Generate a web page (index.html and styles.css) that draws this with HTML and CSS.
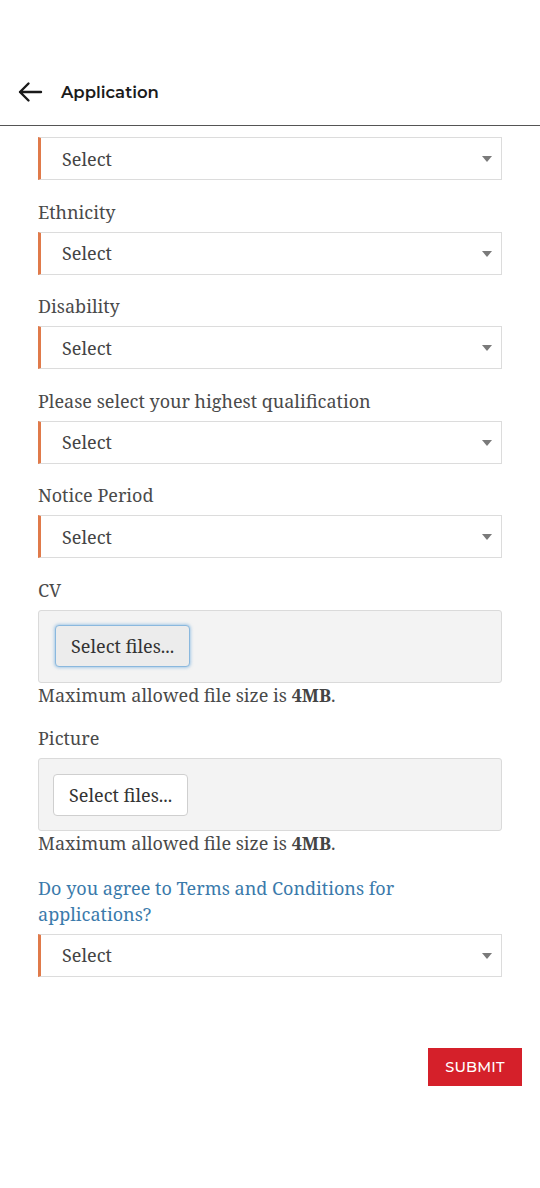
FILE: index.html
```html
<!DOCTYPE html>
<html lang="en">
<head>
<meta charset="utf-8">
<title>Application</title>
<link rel="stylesheet" href="styles.css">
</head>
<body>
<div class="app">
  <header class="topbar">
    <button class="back" aria-label="Back">
      <svg width="26" height="22" viewBox="0 0 26 22"><path d="M24 11H3M11.5 2.5L3 11l8.5 8.5" fill="none" stroke="#1a1a1a" stroke-width="2.4" stroke-linecap="round" stroke-linejoin="round"/></svg>
    </button>
    <h1 class="title">Application</h1>
  </header>

  <form class="form">
    <div class="field first">
      <div class="select required"><span>Select</span><i class="caret"></i></div>
    </div>

    <div class="field">
      <label class="label">Ethnicity</label>
      <div class="select required"><span>Select</span><i class="caret"></i></div>
    </div>

    <div class="field">
      <label class="label">Disability</label>
      <div class="select required"><span>Select</span><i class="caret"></i></div>
    </div>

    <div class="field">
      <label class="label">Please select your highest qualification</label>
      <div class="select required"><span>Select</span><i class="caret"></i></div>
    </div>

    <div class="field">
      <label class="label">Notice Period</label>
      <div class="select required"><span>Select</span><i class="caret"></i></div>
    </div>

    <div class="field">
      <label class="label">CV</label>
      <div class="upload required"><button type="button" class="files focused">Select files...</button></div>
      <p class="hint">Maximum allowed file size is <b>4MB</b>.</p>
    </div>

    <div class="field">
      <label class="label">Picture</label>
      <div class="upload"><button type="button" class="files">Select files...</button></div>
      <p class="hint">Maximum allowed file size is <b>4MB</b>.</p>
    </div>

    <div class="field">
      <label class="label link">Do you agree to Terms and Conditions for applications?</label>
      <div class="select required"><span>Select</span><i class="caret"></i></div>
    </div>

    <div class="actions">
      <button type="button" class="submit">SUBMIT</button>
    </div>
  </form>
</div>
</body>
</html>
```
FILE: styles.css
```css
* { box-sizing: border-box; }

html, body {
  margin: 0;
  padding: 0;
  background: #fff;
}

body {
  font-family: "Noto Serif", "DejaVu Serif", serif;
  color: #444;
}

.app {
  width: 540px;
  min-height: 1188px;
  padding-top: 59px;
}

.topbar {
  height: 67px;
  display: flex;
  align-items: center;
  padding-left: 17px;
  border-bottom: 1.5px solid #555;
}

.back {
  background: none;
  border: 0;
  padding: 0;
  width: 26px;
  height: 22px;
  display: flex;
}

.title {
  margin: 0 0 0 18px;
  font-family: "Montserrat", "Inter", "Noto Sans", sans-serif;
  font-weight: 600;
  font-size: 16.5px;
  color: #1b1b1b;
}

.form {
  padding: 0 38px;
}

.field {
  margin-top: 19.5px;
}

.field.first {
  margin-top: 11px;
}

.label {
  display: block;
  font-size: 18px;
  line-height: 25px;
  color: #4a4a4a;
  margin-bottom: 7px;
}

.label.link {
  color: #3a7aab;
  line-height: 26px;
  padding-right: 80px;
}

.select {
  position: relative;
  height: 43px;
  border: 1px solid #dcdcdc;
  background: #fff;
  display: flex;
  align-items: center;
  padding-left: 21px;
  font-size: 18px;
  color: #444;
}

.required {
  border-left: 3px solid #e07a4a;
}

.caret {
  position: absolute;
  right: 9px;
  top: 18px;
  width: 0;
  height: 0;
  border-left: 5px solid transparent;
  border-right: 5px solid transparent;
  border-top: 6px solid #7a7a7a;
}

.upload {
  height: 73px;
  background: #f3f3f3;
  border: 1px solid #dadada;
  border-radius: 3px;
  display: flex;
  align-items: center;
  padding-left: 14px;
}

.upload.required {
  padding-left: 16px;
}

.files {
  font-family: "Noto Serif", "DejaVu Serif", serif;
  font-size: 18px;
  color: #333;
  height: 42px;
  padding: 0 15px;
  background: #fff;
  border: 1px solid #cfcfcf;
  border-radius: 4px;
}

.files.focused {
  background: #ececec;
  border-color: #8ab8de;
  box-shadow: 0 0 3px 1px rgba(110, 170, 220, 0.55);
}

.hint {
  margin: 0;
  font-size: 18px;
  line-height: 24px;
  color: #4a4a4a;
}

.hint b {
  font-weight: 700;
  color: #444;
}

.actions {
  display: flex;
  justify-content: flex-end;
  margin-top: 71px;
  margin-right: -20px;
}

.submit {
  width: 94px;
  height: 38px;
  background: #d5202a;
  color: #fff;
  border: 0;
  font-family: "Montserrat", "Inter", "Noto Sans", sans-serif;
  font-size: 14.5px;
  font-weight: 500;
  letter-spacing: 0.2px;
}
```
